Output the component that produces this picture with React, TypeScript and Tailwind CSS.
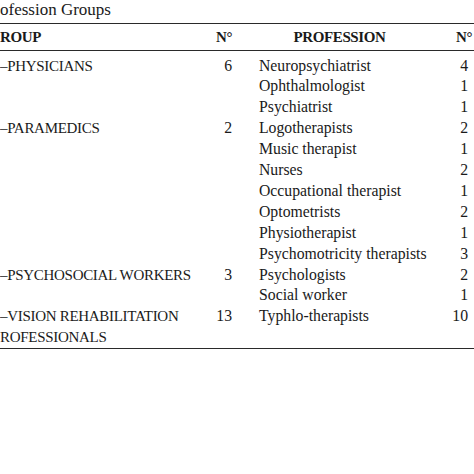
const groups = [
  {
    name: '–PHYSICIANS',
    n: 6,
    professions: [
      { name: 'Neuropsychiatrist', n: 4 },
      { name: 'Ophthalmologist', n: 1 },
      { name: 'Psychiatrist', n: 1 },
    ],
  },
  {
    name: '–PARAMEDICS',
    n: 2,
    professions: [
      { name: 'Logotherapists', n: 2 },
      { name: 'Music therapist', n: 1 },
      { name: 'Nurses', n: 2 },
      { name: 'Occupational therapist', n: 1 },
      { name: 'Optometrists', n: 2 },
      { name: 'Physiotherapist', n: 1 },
      { name: 'Psychomotricity therapists', n: 3 },
    ],
  },
  {
    name: '–PSYCHOSOCIAL WORKERS',
    n: 3,
    professions: [
      { name: 'Psychologists', n: 2 },
      { name: 'Social worker', n: 1 },
    ],
  },
  {
    name: '–VISION REHABILITATION ROFESSIONALS',
    n: 13,
    professions: [{ name: 'Typhlo-therapists', n: 10 }],
  },
];

export default function App() {
  return (
    <div className="w-[474px] h-[474px] overflow-hidden bg-white text-[#1a1a1a] font-['Liberation_Serif',serif]">
      <div className="text-[17px] leading-[20px] pb-[3px]">ofession Groups</div>

      <div className="border-t-[1.5px] border-b border-[#2a2a2a] h-[27.5px] flex items-center pr-[6px] text-[15px] font-bold tracking-[-0.4px]">
        <div className="w-[200px]">ROUP</div>
        <div className="w-[32px] text-right -mr-[3px]">N°</div>
        <div className="ml-[27px] w-[167px] text-center">PROFESSION</div>
        <div className="flex-1 text-right -mr-[4px]">N°</div>
      </div>

      <div className="pt-[5px] pr-[6px] border-b-[1.5px] border-[#2a2a2a] leading-[20.9px]">
        {groups.map((g) => (
          <div key={g.name} className="flex">
            <div className="w-[200px] text-[15px] tracking-[-0.3px]">{g.name}</div>
            <div className="w-[32px] text-right text-[15.75px]">{g.n}</div>
            <div className="ml-[27px] flex-1 flex flex-col text-[15.75px]">
              {g.professions.map((p) => (
                <div key={p.name} className="flex justify-between">
                  <span>{p.name}</span>
                  <span>{p.n}</span>
                </div>
              ))}
            </div>
          </div>
        ))}
      </div>
    </div>
  );
}
